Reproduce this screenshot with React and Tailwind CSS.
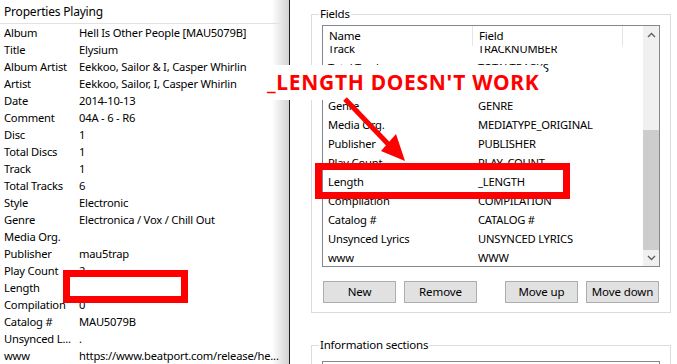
import React from "react";

const leftRows = [
  ["Album", "Hell Is Other People [MAU5079B]"],
  ["Title", "Elysium"],
  ["Album Artist", "Eekkoo, Sailor & I, Casper Whirlin"],
  ["Artist", "Eekkoo, Sailor, I, Casper Whirlin"],
  ["Date", "2014-10-13"],
  ["Comment", "04A - 6 - R6"],
  ["Disc", "1"],
  ["Total Discs", "1"],
  ["Track", "1"],
  ["Total Tracks", "6"],
  ["Style", "Electronic"],
  ["Genre", "Electronica / Vox / Chill Out"],
  ["Media Org.", ""],
  ["Publisher", "mau5trap"],
  ["Play Count", "2"],
  ["Length", ""],
  ["Compilation", "0"],
  ["Catalog #", "MAU5079B"],
  ["Unsynced L...", "."],
  ["www", "https://www.beatport.com/release/he..."],
];

const fieldRows = [
  ["Track", "TRACKNUMBER"],
  ["Total Tracks", "TOTALTRACKS"],
  ["Style", "STYLE"],
  ["Genre", "GENRE"],
  ["Media Org.", "MEDIATYPE_ORIGINAL"],
  ["Publisher", "PUBLISHER"],
  ["Play Count", "PLAY_COUNT"],
  ["Length", "_LENGTH"],
  ["Compilation", "COMPILATION"],
  ["Catalog #", "CATALOG #"],
  ["Unsynced Lyrics", "UNSYNCED LYRICS"],
  ["www", "WWW"],
];

function Chevron({ up }) {
  return (
    <svg width="9" height="6" viewBox="0 0 9 6">
      <polyline
        points={up ? "1,5 4.5,1.5 8,5" : "1,1 4.5,4.5 8,1"}
        fill="none"
        stroke="#606060"
        strokeWidth="1.4"
      />
    </svg>
  );
}

function Button({ children }) {
  return (
    <div className="w-[73px] h-[22px] border border-[#adadad] bg-[#e1e1e1] flex items-center justify-center text-[11.5px] tracking-[-0.1px] text-black">
      {children}
    </div>
  );
}

export default function App() {
  return (
    <div
      className="relative w-[677px] h-[364px] overflow-hidden bg-white flex text-black text-[11.2px] tracking-[-0.2px]"
      style={{ fontFamily: '"Noto Sans", "Open Sans", sans-serif' }}
    >
      {/* Left panel */}
      <div className="w-[290px] h-full shrink-0 border-r border-[#1e1e1e] bg-[linear-gradient(to_right,#ffffff_272px,#d2d2d2_289px)] flex flex-col">
        <div className="h-[24px] pl-[4px] flex items-center text-[12px] w-[278px] border-b border-[#e2e2e2] box-content">
          Properties Playing
        </div>
        <div className="flex flex-col">
          {leftRows.map(([k, v]) => (
            <div key={k} className="h-[17px] flex items-center leading-[17px] pl-[4px] whitespace-nowrap">
              <div className="w-[75px] shrink-0">{k}</div>
              <div>{v}</div>
            </div>
          ))}
        </div>
      </div>

      {/* Right panel */}
      <div className="flex-1 pl-[21px] flex flex-col">
        <fieldset className="mt-[6px] w-[360px] border border-[#dcdcdc] px-[10px] pb-[9px]">
          <legend className="ml-[-3px] px-[1px] text-[11.5px] leading-[16px]">Fields</legend>
          <div className="mt-[3px] h-[242px] border border-[#828790] flex bg-white">
            <div className="flex-1 flex flex-col overflow-hidden">
              <div className="h-[20px] shrink-0 flex text-[11.5px] relative z-10 bg-white">
                <div className="w-[150px] pl-[6px] border-r border-[#e5e5e5] flex items-center">Name</div>
                <div className="w-[150px] pl-[6px] border-r border-[#e5e5e5] flex items-center">Field</div>
              </div>
              <div className="flex-1 overflow-hidden">
                <div className="-mt-[6px]">
                  {fieldRows.map(([n, f]) => (
                    <div key={n} className="h-[19px] flex items-center whitespace-nowrap">
                      <div className="w-[150px] pl-[5px]">{n}</div>
                      <div className="w-[150px] pl-[5px]">{f}</div>
                    </div>
                  ))}
                </div>
              </div>
            </div>
            <div className="w-[16px] bg-[#f0f0f0] flex flex-col">
              <div className="h-[17px] flex items-center justify-center">
                <Chevron up />
              </div>
              <div className="h-[87px]" />
              <div className="h-[120px] bg-[#cdcdcd]" />
              <div className="h-[16px] flex items-center justify-center">
                <Chevron />
              </div>
            </div>
          </div>
          <div className="mt-[14px] flex justify-between px-[1px]">
            <div className="flex gap-[8px]">
              <Button>New</Button>
              <Button>Remove</Button>
            </div>
            <div className="flex gap-[8px]">
              <Button>Move up</Button>
              <Button>Move down</Button>
            </div>
          </div>
        </fieldset>

        <fieldset className="mt-[24px] w-[360px] border border-[#dcdcdc] px-[10px] h-[60px]">
          <legend className="ml-[-3px] px-[1px] text-[11.5px] leading-[16px]">Information sections</legend>
          <div className="mt-[8px] h-[40px] border border-[#828790]" />
        </fieldset>
      </div>

      {/* Annotations */}
      <div className="absolute left-[63px] top-[270px] w-[125px] h-[33px] border-[7px] border-[#ff0000] bg-white" />
      <div className="absolute left-[315px] top-[163px] w-[255px] h-[36px] border-[7px] border-[#ff0000]" />
      <div className="absolute left-[264px] top-[65px] w-[282px] h-[35px] rounded-[8px] bg-white flex items-center pl-[3px] pt-[1px] text-[21px] tracking-[0.7px] font-bold text-[#ff0000] whitespace-nowrap">
        _LENGTH DOESN'T WORK
      </div>
      <svg className="absolute left-0 top-0" width="677" height="364" viewBox="0 0 677 364">
        <line x1="345" y1="99" x2="390" y2="146" stroke="#ff0000" strokeWidth="5" />
        <polygon points="405,161 381,151 396,134" fill="#ff0000" />
      </svg>
    </div>
  );
}
